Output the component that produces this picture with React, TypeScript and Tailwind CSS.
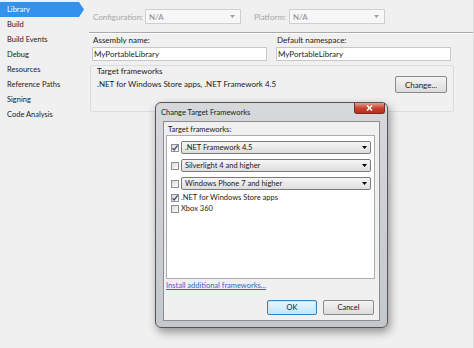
import React from 'react';

const navItems = ['Library', 'Build', 'Build Events', 'Debug', 'Resources', 'Reference Paths', 'Signing', 'Code Analysis'];

const Arrow = ({ color = '#000' }: { color?: string }) => (
    <svg width="5" height="3" viewBox="0 0 5 3" className="shrink-0">
        <path d="M0 0 H5 L2.5 3 Z" fill={color} />
    </svg>
);

const CheckBox = ({ checked }: { checked?: boolean }) => (
    <div className="relative w-[8px] h-[8px] shrink-0 border border-[#8e8f8f] bg-gradient-to-br from-[#dcdcdc] to-[#fbfbfb]">
        {checked && (
            <svg width="8" height="8" viewBox="0 0 8 8" className="absolute -left-[1px] -top-[1px]">
                <path d="M1.5 4.2 L3.2 6 L6.6 1.4" fill="none" stroke="#3b4f86" strokeWidth="1.3" />
            </svg>
        )}
    </div>
);

const FrameworkCombo = ({ label, checked }: { label: string; checked?: boolean }) => (
    <div className="flex items-center h-[13px]">
        <div className="w-[10px] flex justify-start">
            <CheckBox checked={checked} />
        </div>
        <div className="flex-1 h-[13px] border border-[#7a7a7a] rounded-[2px] bg-gradient-to-b from-[#f6f6f6] to-[#dedede] flex items-center justify-between pl-[3px] pr-[3px]">
            <span className="leading-none">{label}</span>
            <Arrow />
        </div>
    </div>
);

export default function App() {
    return (
        <div className="relative w-[474px] h-[348px] overflow-hidden bg-[#f0f0f0] flex font-['Lato',sans-serif] text-[8px] text-[#1a1a1a] border-r border-[#dedede]">
            {/* Left navigation */}
            <div className="w-[86px] shrink-0 pt-[2px] text-[7.5px]">
                {navItems.map((item, i) => (
                    <div key={item} className="relative h-[15px] flex items-center pl-[7px]">
                        {i === 0 && (
                            <div className="absolute left-0 top-0 w-[84px] h-[15px] bg-[#3193ee] [clip-path:polygon(0_0,79px_0,84px_50%,79px_100%,0_100%)]"></div>
                        )}
                        <span className={`relative ${i === 0 ? 'text-white' : 'text-[#1a1a1a]'}`}>{item}</span>
                    </div>
                ))}
            </div>

            {/* Page content */}
            <div className="flex-1 flex flex-col pt-[9px]">
                <div className="flex items-center h-[15px] pl-[7px]">
                    <span className="text-[#a6a6a6] w-[52px]">Configuration:</span>
                    <div className="w-[96px] h-[15px] border border-[#cfcfcf] bg-[#f7f7f7] flex items-center justify-between pl-[3px] pr-[5px] text-[#8a8a8a]">
                        <span>N/A</span>
                        <Arrow color="#a0a0a0" />
                    </div>
                    <span className="text-[#a6a6a6] ml-[13px] w-[35px]">Platform:</span>
                    <div className="w-[96px] h-[15px] border border-[#cfcfcf] bg-[#f7f7f7] flex items-center justify-between pl-[3px] pr-[5px] text-[#8a8a8a]">
                        <span>N/A</span>
                        <Arrow color="#a0a0a0" />
                    </div>
                </div>

                <div className="mt-[8px] ml-[3px] h-[2px] border-t border-[#a9a9a9] border-b border-b-white"></div>

                <div className="flex mt-[1px] pl-[6px] gap-[9px]">
                    <div className="flex flex-col w-[175px]">
                        <span className="h-[11px] leading-[11px] pl-[1px]">Assembly name:</span>
                        <div className="mt-[1px] h-[14px] bg-white border border-[#c7c7c7] flex items-center pl-[1px]">MyPortableLibrary</div>
                    </div>
                    <div className="flex flex-col w-[175px]">
                        <span className="h-[11px] leading-[11px] pl-[1px]">Default namespace:</span>
                        <div className="mt-[1px] h-[14px] bg-white border border-[#c7c7c7] flex items-center pl-[1px]">MyPortableLibrary</div>
                    </div>
                </div>

                <div className="mt-[4px] ml-[4px] w-[364px] h-[47px] border border-[#d9dde2] rounded-[2px] flex justify-between pl-[6px] pr-[6px]">
                    <div className="flex flex-col">
                        <span className="h-[10px] leading-[10px]">Target frameworks</span>
                        <span className="mt-[3px] h-[10px] leading-[10px]">.NET for Windows Store apps, .NET Framework 4.5</span>
                    </div>
                    <button className="mt-[10px] w-[52px] h-[17px] border border-[#8a8a8a] rounded-[2px] bg-gradient-to-b from-[#f4f4f4] to-[#dcdcdc] text-[#1a1a1a]">Change...</button>
                </div>
            </div>

            {/* Change Target Frameworks dialog */}
            <div className="absolute left-[155px] top-[102px] w-[233px] h-[226px] rounded-[6px] border border-[#555] bg-gradient-to-b from-[#d6d8db] to-[#c4c7cb] shadow-[2px_4px_10px_rgba(0,0,0,0.4)] flex flex-col px-[7px] pb-[6px] text-[7.5px]">
                <div className="relative h-[18px] flex items-center">
                    <span className="-ml-[2px] pt-[1px] text-[#1a1a1a]">Change Target Frameworks</span>
                    <div className="absolute -right-[5px] top-0 w-[31px] h-[11px] rounded-b-[3px] border border-[#7a2a20] border-t-0 bg-gradient-to-b from-[#e09d8e] via-[#c9432f] to-[#b43020] flex items-center justify-center">
                        <svg width="7" height="6" viewBox="0 0 7 6">
                            <path d="M1 0.5 L6 5.5 M6 0.5 L1 5.5" stroke="#fff" strokeWidth="1.5" />
                        </svg>
                    </div>
                </div>

                <div className="flex-1 border border-[#8d8d8d] bg-[#f0f0f0] flex flex-col pl-[2px] pr-[4px] pt-[3px]">
                    <span className="h-[10px] leading-[10px] pl-[2px]">Target frameworks:</span>
                    <div className="h-[144px] bg-white border border-[#abadb3] flex flex-col pl-[4px] pr-[3px] pt-[5px]">
                        <div className="flex flex-col gap-[5px]">
                            <FrameworkCombo label=".NET Framework 4.5" checked />
                            <FrameworkCombo label="Silverlight 4 and higher" />
                            <FrameworkCombo label="Windows Phone 7 and higher" />
                        </div>
                        <div className="mt-[2px] flex items-center h-[11px]">
                            <div className="w-[10px]"><CheckBox checked /></div>
                            <span>.NET for Windows Store apps</span>
                        </div>
                        <div className="flex items-center h-[11px]">
                            <div className="w-[10px]"><CheckBox /></div>
                            <span>Xbox 360</span>
                        </div>
                    </div>
                    <span className="mt-[2px] h-[10px] leading-[10px] text-[#3366cc] underline">Install additional frameworks...</span>
                    <div className="mt-[9px] flex justify-end gap-[6px] pr-[1px]">
                        <button className="w-[50px] h-[15px] border border-[#3c7fb1] rounded-[2px] bg-gradient-to-b from-[#eaf6fd] to-[#bee6fd] shadow-[inset_0_0_0_1px_#c5e7fa]">OK</button>
                        <button className="w-[51px] h-[15px] border border-[#8a8a8a] rounded-[2px] bg-gradient-to-b from-[#f4f4f4] to-[#dcdcdc]">Cancel</button>
                    </div>
                </div>
            </div>
        </div>
    );
}
